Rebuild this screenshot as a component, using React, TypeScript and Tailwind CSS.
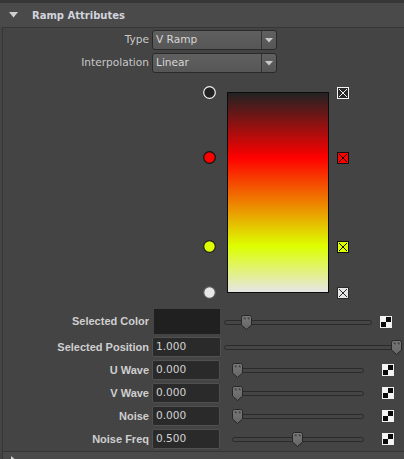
import React from "react";

const FONT = "font-['DejaVu_Sans',sans-serif]";

function Checker({ ml }: { ml: string }) {
  return (
    <div className={`${ml} w-[12px] h-[12px] border border-[#f0f0f0] grid grid-cols-2 grid-rows-2 shrink-0`}>
      <div className="bg-[#f4f4f4]" />
      <div className="bg-[#0a0a0a]" />
      <div className="bg-[#0a0a0a]" />
      <div className="bg-[#f4f4f4]" />
    </div>
  );
}

function Thumb() {
  return (
    <svg width="11" height="15" viewBox="0 0 11 15">
      <defs>
        <linearGradient id="tg" x1="0" y1="0" x2="0" y2="1">
          <stop offset="0" stopColor="#7a7a7a" />
          <stop offset="1" stopColor="#646464" />
        </linearGradient>
      </defs>
      <path
        d="M0.5 2.5 Q0.5 0.5 2.5 0.5 H8.5 Q10.5 0.5 10.5 2.5 V10 L5.5 14.5 L0.5 10 Z"
        fill="url(#tg)"
        stroke="#262626"
        strokeWidth="1"
      />
      <rect x="2.5" y="2.5" width="2" height="1" fill="#2e2e2e" />
      <rect x="3.5" y="3.5" width="1" height="1" fill="#2e2e2e" />
      <rect x="6.5" y="2.5" width="2" height="1" fill="#2e2e2e" />
      <rect x="7.5" y="3.5" width="1" height="1" fill="#2e2e2e" />
    </svg>
  );
}

function Slider({ width, thumb, ml }: { width: number; thumb: number; ml: string }) {
  return (
    <div className={`${ml} relative h-[20px] shrink-0`} style={{ width }}>
      <div className="absolute left-0 right-0 top-[8px] h-[5px] rounded-full border border-[#2a2a2a] bg-[#454545]" />
      <div className="absolute top-[3px]" style={{ left: thumb }}>
        <Thumb />
      </div>
    </div>
  );
}

function Label({ children, bold }: { children: React.ReactNode; bold?: boolean }) {
  return (
    <div
      className={`w-[146px] shrink-0 text-right whitespace-nowrap ${
        bold
          ? "font-['Liberation_Sans',Arial,sans-serif] font-bold text-[11px] text-[#cfcfcf]"
          : "text-[10.6px] text-[#c8c8c8]"
      }`}
    >
      {children}
    </div>
  );
}

function Dropdown({ value }: { value: string }) {
  return (
    <div className="ml-[3px] w-[125px] h-[20px] rounded-[3px] border border-[#2a2a2a] bg-gradient-to-b from-[#606060] to-[#565656] flex items-stretch">
      <div className="flex-1 pl-[3px] flex items-center text-[10.6px] text-[#d6d6d6]">{value}</div>
      <div className="w-[15px] border-l border-[#333] flex items-center justify-center">
        <svg width="8" height="5" viewBox="0 0 8 5">
          <path d="M0 0 H8 L4 4.5 Z" fill="#c9c9c9" />
        </svg>
      </div>
    </div>
  );
}

function Field({ value, w }: { value: string; w: string }) {
  return (
    <div
      className={`ml-[3px] ${w} h-[20px] rounded-[2px] border border-[#505050] bg-[#2a2a2a] pl-[3px] flex items-center text-[10.6px] text-[#d2d2d2]`}
    >
      {value}
    </div>
  );
}

function Circle({ top, fill, stroke }: { top: number; fill: string; stroke: string }) {
  return (
    <div className="absolute left-0" style={{ top: top - 6 }}>
      <svg width="13" height="13" viewBox="0 0 13 13">
        <circle cx="6.5" cy="6.5" r="5.8" fill={fill} stroke={stroke} strokeWidth="1.2" />
      </svg>
    </div>
  );
}

function Square({ top, fill, stroke }: { top: number; fill: string; stroke: string }) {
  return (
    <div className="absolute left-0" style={{ top: top - 5 }}>
      <svg width="12" height="12" viewBox="0 0 12 12">
        <rect x="0.5" y="0.5" width="11" height="11" fill={fill} stroke={stroke} strokeWidth="1" />
        <path d="M2 2 L10 10 M10 2 L2 10" stroke={stroke} strokeWidth="1" />
      </svg>
    </div>
  );
}

export default function App() {
  return (
    <div className={`w-[404px] h-[459px] overflow-hidden bg-[#444444] ${FONT}`}>
      <div className="h-[3px] bg-[#363636]" />
      {/* header */}
      <div className="h-[24px] bg-[#4a4a4a] flex items-center">
        <svg className="ml-[9px]" width="9" height="6" viewBox="0 0 9 6">
          <path d="M0 0 H9 L4.5 5.5 Z" fill="#cfcfcf" />
        </svg>
        <div className="ml-[14px] font-bold text-[10px] text-[#d2d4dc]">Ramp Attributes</div>
      </div>
      {/* panel */}
      <div className="ml-[2px] h-[425px] border-l border-t border-b border-[#363636] bg-[#444444]">
        <div className="mt-[2px] h-[20px] flex items-center">
          <Label>Type</Label>
          <Dropdown value="V Ramp" />
        </div>
        <div className="mt-[3px] h-[20px] flex items-center">
          <Label>Interpolation</Label>
          <Dropdown value="Linear" />
        </div>
        {/* ramp */}
        <div className="h-[236px] pt-[19px] flex items-start">
          <div className="ml-[200px] relative w-[13px] h-[201px]">
            <Circle top={0} fill="#222222" stroke="#f2f2f2" />
            <Circle top={65} fill="#ff0000" stroke="#111" />
            <Circle top={154} fill="#ddff00" stroke="#222" />
            <Circle top={200} fill="#e8e8e8" stroke="#5a5a5a" />
          </div>
          <div className="ml-[11px] w-[102px] h-[201px] border border-[#0c0c0c] bg-[linear-gradient(to_bottom,#222222_0%,#ff0000_32.5%,#ddff00_77%,#e6e6e6_100%)]" />
          <div className="ml-[8px] relative w-[12px] h-[201px]">
            <Square top={0} fill="#2a2a2a" stroke="#f4f4f4" />
            <Square top={65} fill="#ff0000" stroke="#111" />
            <Square top={154} fill="#ddff00" stroke="#111" />
            <Square top={200} fill="#e6e6e6" stroke="#2a2a2a" />
          </div>
        </div>
        {/* selected color */}
        <div className="h-[25px] flex items-center">
          <Label bold>Selected Color</Label>
          <div className="ml-[5px] w-[66px] h-[25px] bg-[#202020]" />
          <Slider ml="ml-[4px]" width={148} thumb={17} />
          <Checker ml="ml-[8px]" />
        </div>
        <div className="mt-[3px] h-[20px] flex items-center">
          <Label bold>Selected Position</Label>
          <Field value="1.000" w="w-[69px]" />
          <Slider ml="ml-[3px]" width={173} thumb={167} />
        </div>
        {[
          ["U Wave", "0.000", 0],
          ["V Wave", "0.000", 0],
          ["Noise", "0.000", 0],
          ["Noise Freq", "0.500", 60],
        ].map(([l, v, t]) => (
          <div key={l as string} className="mt-[3px] h-[20px] flex items-center">
            <Label bold>{l}</Label>
            <Field value={v as string} w="w-[68px]" />
            <Slider ml="ml-[12px]" width={132} thumb={t as number} />
            <Checker ml="ml-[18px]" />
          </div>
        ))}
      </div>
      {/* next header (cut off) */}
      <div className="h-[24px] bg-[#4a4a4a] flex items-start border-l border-[#363636] ml-[2px]">
        <svg className="ml-[8px] mt-[4px]" width="6" height="9" viewBox="0 0 6 9">
          <path d="M0 0 L5.5 4.5 L0 9 Z" fill="#cfcfcf" />
        </svg>
      </div>
    </div>
  );
}
